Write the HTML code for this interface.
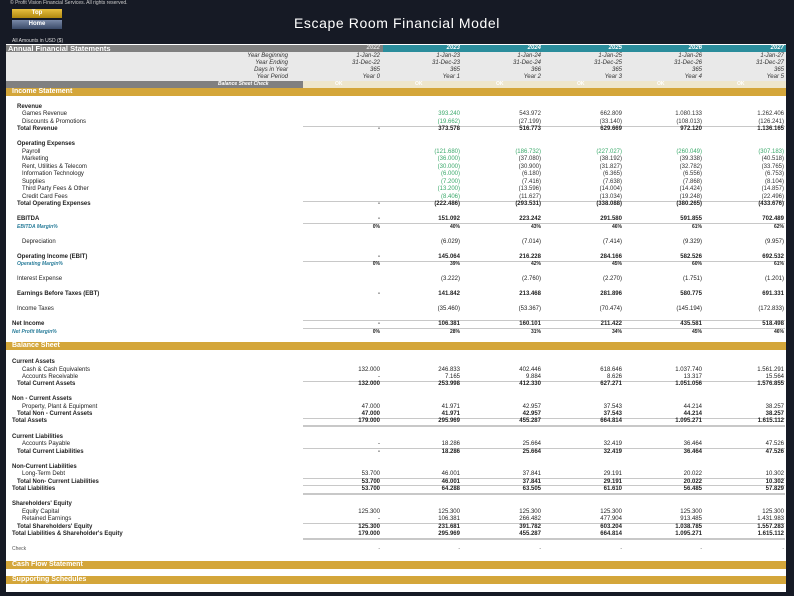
<!DOCTYPE html>
<html><head><meta charset="utf-8"><style>
*{margin:0;padding:0;box-sizing:border-box}
body{width:794px;height:596px;background:#161a25;position:relative;overflow:hidden;font-family:"Liberation Sans",sans-serif;font-size:6px;color:#222}
.a{position:absolute}
.page{position:absolute;left:6px;top:44px;width:780px;height:548px;background:#fff}
.r{position:absolute;left:0;width:794px;height:7px;line-height:7px;white-space:nowrap}
.r span{position:absolute}
.r i{position:absolute;font-style:normal;width:70px;text-align:right}
.b{font-weight:bold}
.g i{color:#3aa86a}
.c0{left:310px}.c1{left:390px}.c2{left:471px}.c3{left:552px}.c4{left:632px}.c5{left:714px}
.ln{position:absolute;left:303px;width:482px;height:1px;background:#c8c8c8}
.m{color:#2a7d9a;font-style:italic;font-weight:bold}
.bar{position:absolute;left:6px;width:780px;height:8px;background:#d4a63a;color:#fff;font-weight:bold;font-size:7px;line-height:8px;padding-left:6px}
.hd i{font-style:italic;color:#333}
</style></head><body>
<div class="a" style="left:10px;top:0;color:#ccc;font-size:5px">© Profit Vision Financial Services. All rights reserved.</div>
<div class="a" style="left:12px;top:9px;width:50px;height:9px;background:linear-gradient(#e8c040,#b08810);color:#fff;font-size:6px;font-weight:bold;text-align:center;line-height:9px">Top</div>
<div class="a" style="left:12px;top:20px;width:50px;height:9px;background:linear-gradient(#7a8aa8,#3a4a68);color:#fff;font-size:6px;font-weight:bold;text-align:center;line-height:9px">Home</div>
<div class="a" style="left:0;width:794px;top:15px;text-align:center;color:#fff;font-size:14px;letter-spacing:0.6px">Escape Room Financial Model</div>
<div class="a" style="left:12px;top:38px;color:#ddd;font-size:5px">All Amounts in USD ($)</div>
<div class="page"></div>
<div class="a" style="left:6px;top:45px;width:377px;height:7px;background:#808080;color:#fff;font-weight:bold;font-size:7.5px;line-height:7px;padding-left:2px">Annual Financial Statements</div>
<div class="a" style="left:383px;top:45px;width:403px;height:7px;background:#2b8d9c"></div>
<div class="r b hd" style="top:45px;color:#fff"><i class="c0" style="color:#ddd">2022</i><i class="c1" style="color:#fff">2023</i><i class="c2" style="color:#fff">2024</i><i class="c3" style="color:#fff">2025</i><i class="c4" style="color:#fff">2026</i><i class="c5" style="color:#fff">2027</i></div>
<div class="a" style="left:6px;top:52px;width:780px;height:29px;background:#e9e9e9"></div>
<div class="r hd" style="top:53px"><i style="left:218px">Year Beginning</i><i class="c0">1-Jan-22</i><i class="c1">1-Jan-23</i><i class="c2">1-Jan-24</i><i class="c3">1-Jan-25</i><i class="c4">1-Jan-26</i><i class="c5">1-Jan-27</i></div>
<div class="r hd" style="top:60px"><i style="left:218px">Year Ending</i><i class="c0">31-Dec-22</i><i class="c1">31-Dec-23</i><i class="c2">31-Dec-24</i><i class="c3">31-Dec-25</i><i class="c4">31-Dec-26</i><i class="c5">31-Dec-27</i></div>
<div class="r hd" style="top:67px"><i style="left:218px">Days in Year</i><i class="c0">365</i><i class="c1">365</i><i class="c2">366</i><i class="c3">365</i><i class="c4">365</i><i class="c5">365</i></div>
<div class="r hd" style="top:74px"><i style="left:218px">Year Period</i><i class="c0">Year 0</i><i class="c1">Year 1</i><i class="c2">Year 2</i><i class="c3">Year 3</i><i class="c4">Year 4</i><i class="c5">Year 5</i></div>
<div class="a" style="left:6px;top:81px;width:297px;height:7px;background:#808080"></div>
<div class="a" style="left:303px;top:81px;width:483px;height:7px;background:#eee6cc"></div>
<div class="r b" style="top:81px;color:#fff;font-size:5px"><span style="left:218px;font-style:italic">Balance Sheet Check</span><span style="left:335px">OK</span><span style="left:415px">OK</span><span style="left:496px">OK</span><span style="left:577px">OK</span><span style="left:657px">OK</span><span style="left:737px">OK</span></div>
<div class="bar" style="top:88px">Income Statement</div>

<div class="r b" style="top:104px"><span style="left:17px">Revenue</span></div>
<div class="r g" style="top:111px"><span style="left:22px">Games Revenue</span><i class="c1">393.240</i><i class="c2" style="color:#333">543.972</i><i class="c3" style="color:#333">662.809</i><i class="c4" style="color:#333">1.080.133</i><i class="c5" style="color:#333">1.262.406</i></div>
<div class="r g" style="top:119px"><span style="left:22px">Discounts &amp; Promotions</span><i class="c1">(19.662)</i><i class="c2" style="color:#333">(27.199)</i><i class="c3" style="color:#333">(33.140)</i><i class="c4" style="color:#333">(108.013)</i><i class="c5" style="color:#333">(126.241)</i></div>
<div class="ln" style="top:126px"></div>
<div class="r b" style="top:126px"><span style="left:17px">Total Revenue</span><i class="c0">-</i><i class="c1">373.578</i><i class="c2">516.773</i><i class="c3">629.669</i><i class="c4">972.120</i><i class="c5">1.136.165</i></div>

<div class="r b" style="top:141px"><span style="left:17px">Operating Expenses</span></div>
<div class="r g" style="top:149px"><span style="left:22px">Payroll</span><i class="c1">(121.680)</i><i class="c2">(186.732)</i><i class="c3">(227.027)</i><i class="c4">(260.049)</i><i class="c5">(307.183)</i></div>
<div class="r g" style="top:156px"><span style="left:22px">Marketing</span><i class="c1">(36.000)</i><i class="c2" style="color:#333">(37.080)</i><i class="c3" style="color:#333">(38.192)</i><i class="c4" style="color:#333">(39.338)</i><i class="c5" style="color:#333">(40.518)</i></div>
<div class="r g" style="top:164px"><span style="left:22px">Rent, Utilities &amp; Telecom</span><i class="c1">(30.000)</i><i class="c2" style="color:#333">(30.900)</i><i class="c3" style="color:#333">(31.827)</i><i class="c4" style="color:#333">(32.782)</i><i class="c5" style="color:#333">(33.765)</i></div>
<div class="r g" style="top:171px"><span style="left:22px">Information Technology</span><i class="c1">(6.000)</i><i class="c2" style="color:#333">(6.180)</i><i class="c3" style="color:#333">(6.365)</i><i class="c4" style="color:#333">(6.556)</i><i class="c5" style="color:#333">(6.753)</i></div>
<div class="r g" style="top:179px"><span style="left:22px">Supplies</span><i class="c1">(7.200)</i><i class="c2" style="color:#333">(7.416)</i><i class="c3" style="color:#333">(7.638)</i><i class="c4" style="color:#333">(7.868)</i><i class="c5" style="color:#333">(8.104)</i></div>
<div class="r g" style="top:186px"><span style="left:22px">Third Party Fees &amp; Other</span><i class="c1">(13.200)</i><i class="c2" style="color:#333">(13.596)</i><i class="c3" style="color:#333">(14.004)</i><i class="c4" style="color:#333">(14.424)</i><i class="c5" style="color:#333">(14.857)</i></div>
<div class="r g" style="top:194px"><span style="left:22px">Credit Card Fees</span><i class="c1">(8.406)</i><i class="c2" style="color:#333">(11.627)</i><i class="c3" style="color:#333">(13.034)</i><i class="c4" style="color:#333">(19.248)</i><i class="c5" style="color:#333">(22.496)</i></div>
<div class="ln" style="top:201px"></div>
<div class="r b" style="top:201px"><span style="left:17px">Total Operating Expenses</span><i class="c0">-</i><i class="c1">(222.486)</i><i class="c2">(293.531)</i><i class="c3">(338.088)</i><i class="c4">(380.265)</i><i class="c5">(433.676)</i></div>

<div class="r b" style="top:216px"><span style="left:17px">EBITDA</span><i class="c0">-</i><i class="c1">151.092</i><i class="c2">223.242</i><i class="c3">291.580</i><i class="c4">591.855</i><i class="c5">702.489</i></div>
<div class="ln" style="top:223px"></div>
<div class="r b" style="top:224px;font-size:5px"><span style="left:17px" class="m">EBITDA Margin%</span><i class="c0">0%</i><i class="c1">40%</i><i class="c2">43%</i><i class="c3">46%</i><i class="c4">61%</i><i class="c5">62%</i></div>
<div class="r" style="top:239px"><span style="left:22px">Depreciation</span><i class="c1">(6.029)</i><i class="c2">(7.014)</i><i class="c3">(7.414)</i><i class="c4">(9.329)</i><i class="c5">(9.957)</i></div>
<div class="r b" style="top:254px"><span style="left:17px">Operating Income (EBIT)</span><i class="c0">-</i><i class="c1">145.064</i><i class="c2">216.228</i><i class="c3">284.166</i><i class="c4">582.526</i><i class="c5">692.532</i></div>
<div class="ln" style="top:261px"></div>
<div class="r b" style="top:261px;font-size:5px"><span style="left:17px" class="m">Operating Margin%</span><i class="c0">0%</i><i class="c1">39%</i><i class="c2">42%</i><i class="c3">45%</i><i class="c4">60%</i><i class="c5">61%</i></div>
<div class="r" style="top:276px"><span style="left:17px">Interest Expense</span><i class="c1">(3.222)</i><i class="c2">(2.760)</i><i class="c3">(2.270)</i><i class="c4">(1.751)</i><i class="c5">(1.201)</i></div>
<div class="r b" style="top:291px"><span style="left:17px">Earnings Before Taxes (EBT)</span><i class="c0">-</i><i class="c1">141.842</i><i class="c2">213.468</i><i class="c3">281.896</i><i class="c4">580.775</i><i class="c5">691.331</i></div>
<div class="r" style="top:306px"><span style="left:17px">Income Taxes</span><i class="c1">(35.460)</i><i class="c2">(53.367)</i><i class="c3">(70.474)</i><i class="c4">(145.194)</i><i class="c5">(172.833)</i></div>
<div class="ln" style="top:320px"></div>
<div class="r b" style="top:321px"><span style="left:12px">Net Income</span><i class="c0">-</i><i class="c1">106.381</i><i class="c2">160.101</i><i class="c3">211.422</i><i class="c4">435.581</i><i class="c5">518.498</i></div>
<div class="ln" style="top:328px"></div>
<div class="r b" style="top:329px;font-size:5px"><span style="left:12px" class="m">Net Profit Margin%</span><i class="c0">0%</i><i class="c1">28%</i><i class="c2">31%</i><i class="c3">34%</i><i class="c4">45%</i><i class="c5">46%</i></div>

<div class="bar" style="top:342px">Balance Sheet</div>
<div class="r b" style="top:359px"><span style="left:12px">Current Assets</span></div>
<div class="r" style="top:367px"><span style="left:22px">Cash &amp; Cash Equivalents</span><i class="c0">132.000</i><i class="c1">246.833</i><i class="c2">402.446</i><i class="c3">618.646</i><i class="c4">1.037.740</i><i class="c5">1.561.291</i></div>
<div class="r" style="top:374px"><span style="left:22px">Accounts Receivable</span><i class="c0">-</i><i class="c1">7.165</i><i class="c2">9.884</i><i class="c3">8.626</i><i class="c4">13.317</i><i class="c5">15.564</i></div>
<div class="ln" style="top:381px"></div>
<div class="r b" style="top:381px"><span style="left:17px">Total Current Assets</span><i class="c0">132.000</i><i class="c1">253.998</i><i class="c2">412.330</i><i class="c3">627.271</i><i class="c4">1.051.056</i><i class="c5">1.576.855</i></div>
<div class="r b" style="top:396px"><span style="left:12px">Non - Current Assets</span></div>
<div class="r" style="top:404px"><span style="left:22px">Property, Plant &amp; Equipment</span><i class="c0">47.000</i><i class="c1">41.971</i><i class="c2">42.957</i><i class="c3">37.543</i><i class="c4">44.214</i><i class="c5">38.257</i></div>
<div class="r b" style="top:411px"><span style="left:17px">Total Non - Current Assets</span><i class="c0">47.000</i><i class="c1">41.971</i><i class="c2">42.957</i><i class="c3">37.543</i><i class="c4">44.214</i><i class="c5">38.257</i></div>
<div class="ln" style="top:418px"></div>
<div class="r b" style="top:418px"><span style="left:12px">Total Assets</span><i class="c0">179.000</i><i class="c1">295.969</i><i class="c2">455.287</i><i class="c3">664.814</i><i class="c4">1.095.271</i><i class="c5">1.615.112</i></div>
<div class="ln" style="top:425px;height:2px"></div>
<div class="r b" style="top:434px"><span style="left:12px">Current Liabilities</span></div>
<div class="r" style="top:441px"><span style="left:22px">Accounts Payable</span><i class="c0">-</i><i class="c1">18.286</i><i class="c2">25.664</i><i class="c3">32.419</i><i class="c4">36.464</i><i class="c5">47.526</i></div>
<div class="ln" style="top:448px"></div>
<div class="r b" style="top:449px"><span style="left:17px">Total Current Liabilities</span><i class="c0">-</i><i class="c1">18.286</i><i class="c2">25.664</i><i class="c3">32.419</i><i class="c4">36.464</i><i class="c5">47.526</i></div>
<div class="r b" style="top:464px"><span style="left:12px">Non-Current Liabilities</span></div>
<div class="r" style="top:471px"><span style="left:22px">Long-Term Debt</span><i class="c0">53.700</i><i class="c1">46.001</i><i class="c2">37.841</i><i class="c3">29.191</i><i class="c4">20.022</i><i class="c5">10.302</i></div>
<div class="ln" style="top:478px"></div>
<div class="r b" style="top:479px"><span style="left:17px">Total Non- Current Liabilities</span><i class="c0">53.700</i><i class="c1">46.001</i><i class="c2">37.841</i><i class="c3">29.191</i><i class="c4">20.022</i><i class="c5">10.302</i></div>
<div class="ln" style="top:485px"></div>
<div class="r b" style="top:486px"><span style="left:12px">Total Liabilities</span><i class="c0">53.700</i><i class="c1">64.288</i><i class="c2">63.505</i><i class="c3">61.610</i><i class="c4">56.485</i><i class="c5">57.829</i></div>
<div class="ln" style="top:493px;height:2px"></div>
<div class="r b" style="top:501px"><span style="left:12px">Shareholders' Equity</span></div>
<div class="r" style="top:509px"><span style="left:22px">Equity Capital</span><i class="c0">125.300</i><i class="c1">125.300</i><i class="c2">125.300</i><i class="c3">125.300</i><i class="c4">125.300</i><i class="c5">125.300</i></div>
<div class="r" style="top:516px"><span style="left:22px">Retained Earnings</span><i class="c0">-</i><i class="c1">106.381</i><i class="c2">266.482</i><i class="c3">477.904</i><i class="c4">913.485</i><i class="c5">1.431.983</i></div>
<div class="ln" style="top:523px"></div>
<div class="r b" style="top:524px"><span style="left:17px">Total Shareholders' Equity</span><i class="c0">125.300</i><i class="c1">231.681</i><i class="c2">391.782</i><i class="c3">603.204</i><i class="c4">1.038.785</i><i class="c5">1.557.283</i></div>
<div class="r b" style="top:531px"><span style="left:12px">Total Liabilities &amp; Shareholder's Equity</span><i class="c0">179.000</i><i class="c1">295.969</i><i class="c2">455.287</i><i class="c3">664.814</i><i class="c4">1.095.271</i><i class="c5">1.615.112</i></div>
<div class="ln" style="top:538px;height:2px"></div>
<div class="r" style="top:546px;font-size:5px;color:#555"><span style="left:12px">Check</span><i class="c0">-</i><i class="c1">-</i><i class="c2">-</i><i class="c3">-</i><i class="c4">-</i><i class="c5">-</i></div>
<div class="bar" style="top:561px">Cash Flow Statement</div>
<div class="bar" style="top:576px">Supporting Schedules</div>
</body></html>
